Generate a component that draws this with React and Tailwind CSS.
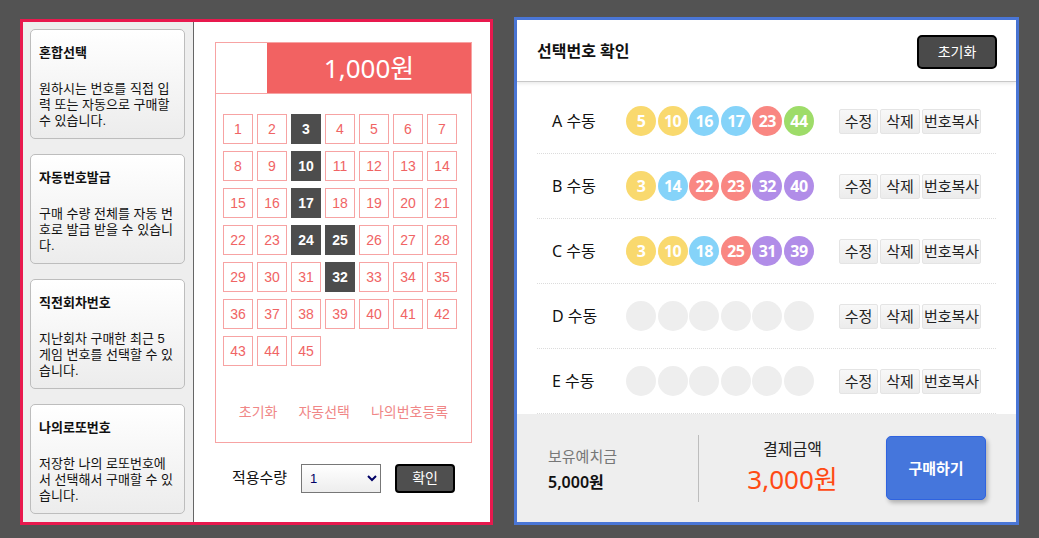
import { useState } from 'react';

const KR = { fontFamily: '"Liberation Sans", "Noto Sans CJK KR", sans-serif' };
const NOTO = { fontFamily: '"Noto Sans", "Noto Sans CJK KR", sans-serif' };

const modes = [
  { title: '혼합선택', desc: '원하시는 번호를 직접 입력 또는 자동으로 구매할 수 있습니다.' },
  { title: '자동번호발급', desc: '구매 수량 전체를 자동 번호로 발급 받을 수 있습니다.' },
  { title: '직전회차번호', desc: '지난회차 구매한 최근 5게임 번호를 선택할 수 있습니다.' },
  { title: '나의로또번호', desc: '저장한 나의 로또번호에서 선택해서 구매할 수 있습니다.' },
];

const picked = [3, 10, 17, 24, 25, 32];

const games = [
  { label: 'A 수동', nums: [5, 10, 16, 17, 23, 44] },
  { label: 'B 수동', nums: [3, 14, 22, 23, 32, 40] },
  { label: 'C 수동', nums: [3, 10, 18, 25, 31, 39] },
  { label: 'D 수동', nums: [] },
  { label: 'E 수동', nums: [] },
];

// 번호대별 공 색상
function ballColor(n) {
  if (n <= 10) return 'bg-[#f9d96e]';
  if (n <= 20) return 'bg-[#85d3f9]';
  if (n <= 30) return 'bg-[#f98782]';
  if (n <= 40) return 'bg-[#b18de8]';
  return 'bg-[#9edc69]';
}

function Ball({ n }) {
  if (!n) return <span className="w-[30px] h-[30px] rounded-full bg-[#eeeeee]" />;
  return (
    <span
      style={NOTO}
      className={`w-[30px] h-[30px] rounded-full ${ballColor(n)} text-white font-bold text-[16px] flex items-center justify-center tracking-[-0.5px]`}
    >
      {n}
    </span>
  );
}

function SmallBtn({ children, w }) {
  return (
    <button
      className={`${w} h-[25px] rounded-[2px] border border-[#e4e4e4] bg-gradient-to-b from-[#f8f8f8] to-[#ececec] text-[15px] text-[#222] flex items-center justify-center`}
    >
      {children}
    </button>
  );
}

export default function App() {
  const [qty, setQty] = useState('1');

  return (
    <div style={KR} className="w-[1039px] h-[538px] bg-[#535353] flex items-start pl-[20px] gap-[21px] overflow-hidden">
      {/* 왼쪽: 번호 선택 */}
      <div className="mt-[19px] w-[473px] h-[506px] border-[3px] border-[#e8194e] bg-white flex">
        <div className="w-[171px] h-full bg-[#eeeeee] border-r border-[#666] pl-[7px] pt-[7px] flex flex-col gap-[15px]">
          {modes.map(m => (
            <div
              key={m.title}
              className="w-[155px] h-[110px] rounded-[5px] border border-[#bdbdbd] bg-gradient-to-b from-[#ffffff] to-[#ececec] px-[8px] pt-[15px]"
            >
              <div className="text-[13px] font-bold text-[#111] leading-[16px]">{m.title}</div>
              <div className="mt-[20px] text-[13px] text-[#111] leading-[16px] break-all">{m.desc}</div>
            </div>
          ))}
        </div>

        <div className="flex-1 flex flex-col items-start pl-[21px] pt-[20px]">
          <div className="w-[257px] h-[401px] border border-[#f7a3a3] flex flex-col">
            <div className="h-[51px] border-b border-[#f7a3a3] flex">
              <div className="w-[51px]" />
              <div className="flex-1 bg-[#f26262] text-white text-[26px] flex items-center justify-center" style={NOTO}>
                1,000원
              </div>
            </div>
            <div className="pl-[7px] pt-[20px] grid grid-cols-[repeat(7,30px)] gap-x-[4px] gap-y-[7px]">
              {Array.from({ length: 45 }, (_, i) => i + 1).map(n => {
                const on = picked.includes(n);
                return (
                  <div
                    key={n}
                    className={`w-[30px] h-[30px] flex items-center justify-center text-[14px] ${
                      on ? 'bg-[#4d4d4d] text-white font-bold' : 'border border-[#f7a3a3] text-[#f06464]'
                    }`}
                  >
                    {n}
                  </div>
                );
              })}
            </div>
            <div className="mt-auto mb-[19px] flex justify-center gap-[21px] text-[14px] text-[#f08787]">
              <span>초기화</span>
              <span>자동선택</span>
              <span>나의번호등록</span>
            </div>
          </div>

          <div className="w-[257px] mt-[21px] flex items-center justify-center gap-[14px]">
            <span className="text-[15px] text-[#111]">적용수량</span>
            <select
              value={qty}
              onChange={e => setQty(e.target.value)}
              className="w-[80px] h-[29px] border border-[#777] bg-gradient-to-b from-white to-[#ededed] text-[13px] text-[#000066] px-[4px]"
            >
              {[1, 2, 3, 4, 5].map(v => (
                <option key={v} value={v}>{v}</option>
              ))}
            </select>
            <button className="w-[60px] h-[29px] rounded-[4px] border-2 border-black bg-[#4f4f4f] text-white text-[14px]">
              확인
            </button>
          </div>
        </div>
      </div>

      {/* 오른쪽: 선택번호 확인 */}
      <div style={NOTO} className="mt-[17px] w-[505px] h-[508px] border-[3px] border-[#4a76d6] bg-white flex flex-col">
        <div className="h-[62px] shrink-0 border-b border-[#c8c8c8] shadow-[0_2px_3px_rgba(0,0,0,0.08)] flex items-center justify-between pl-[20px] pr-[19px]">
          <span className="text-[16px] font-bold text-[#111]">선택번호 확인</span>
          <button className="w-[80px] h-[34px] rounded-[5px] border-2 border-black bg-[#4a4a4a] text-white text-[14px] mt-[2px]">
            초기화
          </button>
        </div>

        <div className="px-[20px] pt-[7px]">
          {games.map(g => (
            <div key={g.label} className="h-[65px] border-b border-dotted border-[#dcdcdc] flex items-center pl-[15px] pr-[15px]">
              <span className="w-[74px] text-[16px] text-[#111]">{g.label}</span>
              <div className="flex gap-[1.6px]">
                {Array.from({ length: 6 }, (_, i) => (
                  <Ball key={i} n={g.nums[i]} />
                ))}
              </div>
              <div className="ml-auto flex gap-[2px]">
                <SmallBtn w="w-[39px]">수정</SmallBtn>
                <SmallBtn w="w-[40px]">삭제</SmallBtn>
                <SmallBtn w="w-[59px]">번호복사</SmallBtn>
              </div>
            </div>
          ))}
        </div>

        <div className="flex-1 bg-[#eeeeee] flex items-center">
          <div className="w-[181px] pl-[31px] pt-[2px]">
            <div className="text-[15px] text-[#777] leading-[20px]">보유예치금</div>
            <div className="mt-[6px] text-[16px] font-semibold text-[#111] leading-[20px]">5,000원</div>
          </div>
          <div className="w-px h-[67px] bg-[#bdbdbd]" />
          <div className="flex-1 text-center">
            <div className="text-[16px] text-[#222] leading-[20px]">결제금액</div>
            <div className="mt-[2px] text-[26px] text-[#ff4a14] leading-[36px]">3,000원</div>
          </div>
          <button className="mr-[30px] w-[100px] h-[64px] rounded-[5px] border border-[#2f63e0] bg-[#4576dc] text-white text-[15px] font-bold shadow-[2px_3px_4px_rgba(0,0,0,0.25)]">
            구매하기
          </button>
        </div>
      </div>
    </div>
  );
}
